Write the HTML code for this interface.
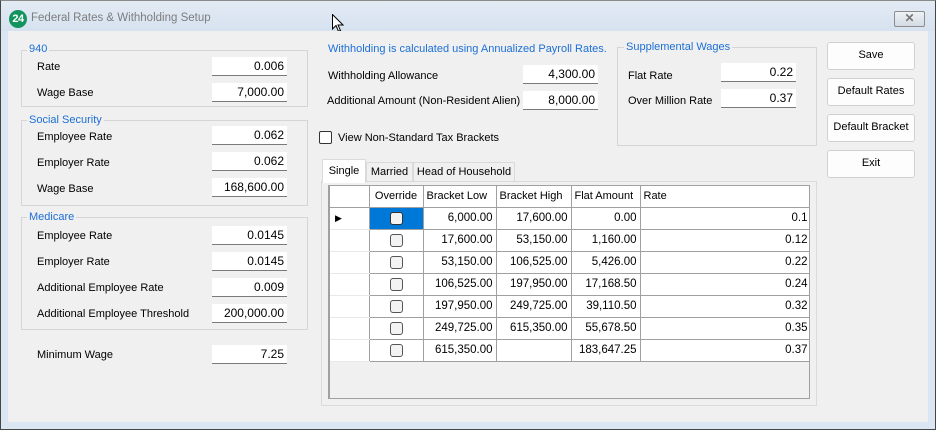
<!DOCTYPE html>
<html><head><meta charset="utf-8"><style>
*{box-sizing:border-box;margin:0;padding:0}
body{width:936px;height:430px;overflow:hidden;font-family:"Liberation Sans",sans-serif;font-size:11px;color:#000;background:#dae6f3;position:relative;white-space:nowrap}
.a{position:absolute}
.frame{left:0;top:0;width:936px;height:430px;border:1px solid #464646;border-top-color:#8a8a8a;background:#dbe6f3}
.title{left:1px;top:1px;width:934px;height:30px;background:linear-gradient(#e3ebf4,#d6e2f0)}
.body{left:8px;top:31px;width:920px;height:391px;background:#f0f0f0}
.grp{border:1px solid #d5d5d5}
.leg{background:#f0f0f0;color:#1c6fd6;padding:0 2px;line-height:13px}
.tb{background:#fff;border-bottom:1px solid #7a7a7a;text-align:right;padding-right:3px;line-height:19px;height:19px;font-size:12px}
.lbl{line-height:14px}
.btn{background:#fdfdfd;border:1px solid #d0d0d0;border-radius:3px;text-align:center;line-height:25px}
.cb{width:12px;height:12px;border:1px solid #333;border-radius:2px;background:#fff}
table{border-collapse:collapse;table-layout:fixed}
td{border:1px solid #a0a0a0;height:22px;padding:0 3px;text-align:right;background:#fff;white-space:nowrap;font-size:11.5px}
tr.h td{text-align:left;height:21px;font-size:11px}
td.rh{border-left:none;border-right:1px solid #a0a0a0;border-top:1px solid #f0f0f0;border-bottom:1px solid #e8e8e8}
.gc{display:inline-block;width:13px;height:13px;border:1px solid #555;border-radius:3px;background:#f3f3f3;vertical-align:middle}
</style></head><body>
<div class="a frame"></div>
<div class="a title"></div>
<div class="a" style="left:9px;top:10px;width:18px;height:18px;border-radius:50%;background:#13945f;color:#fff;font-weight:bold;font-size:11px;line-height:18px;text-align:center;letter-spacing:-0.5px">24</div>
<div class="a" style="left:31px;top:12px;color:#7d7d7d;font-size:11.5px">Federal Rates &amp; Withholding Setup</div>
<svg class="a" style="left:332px;top:14px" width="12" height="19" viewBox="0 0 12 19"><path d="M0.5 0.5 L0.5 15 L4 11.5 L6.5 17.5 L8.5 16.5 L6 11 L11 11 Z" fill="#fff" stroke="#000"/></svg>
<div class="a" style="left:894px;top:11px;width:31px;height:16px;border:1px solid #8d8d8d;border-radius:2px;background:linear-gradient(#eef2f6,#d4dbe4);text-align:center;font-size:12px;line-height:13px;color:#777;font-weight:bold">✕</div>
<div class="a body"></div>

<div class="a grp" style="left:21px;top:50px;width:287px;height:57px"></div>
<div class="a leg" style="left:27px;top:43px">940</div>
<div class="a lbl" style="left:37px;top:60px">Rate</div><div class="a tb" style="left:212px;top:57px;width:75px">0.006</div>
<div class="a lbl" style="left:37px;top:86px">Wage Base</div><div class="a tb" style="left:212px;top:83px;width:75px">7,000.00</div>

<div class="a grp" style="left:21px;top:120px;width:287px;height:86px"></div>
<div class="a leg" style="left:27px;top:114px">Social Security</div>
<div class="a lbl" style="left:37px;top:130px">Employee Rate</div><div class="a tb" style="left:212px;top:126px;width:75px">0.062</div>
<div class="a lbl" style="left:37px;top:156px">Employer Rate</div><div class="a tb" style="left:212px;top:152px;width:75px">0.062</div>
<div class="a lbl" style="left:37px;top:182px">Wage Base</div><div class="a tb" style="left:212px;top:178px;width:75px">168,600.00</div>

<div class="a grp" style="left:21px;top:217px;width:287px;height:113px"></div>
<div class="a leg" style="left:27px;top:211px">Medicare</div>
<div class="a lbl" style="left:37px;top:229px">Employee Rate</div><div class="a tb" style="left:212px;top:226px;width:75px">0.0145</div>
<div class="a lbl" style="left:37px;top:255px">Employer Rate</div><div class="a tb" style="left:212px;top:252px;width:75px">0.0145</div>
<div class="a lbl" style="left:37px;top:281px">Additional Employee Rate</div><div class="a tb" style="left:212px;top:278px;width:75px">0.009</div>
<div class="a lbl" style="left:37px;top:307px">Additional Employee Threshold</div><div class="a tb" style="left:212px;top:304px;width:75px">200,000.00</div>

<div class="a lbl" style="left:37px;top:348px">Minimum Wage</div><div class="a tb" style="left:212px;top:345px;width:75px">7.25</div>

<div class="a" style="left:328px;top:43px;color:#1c6fd6">Withholding is calculated using Annualized Payroll Rates.</div>
<div class="a lbl" style="left:328px;top:69px">Withholding Allowance</div><div class="a tb" style="left:523px;top:65px;width:75px">4,300.00</div>
<div class="a lbl" style="left:327px;top:94px">Additional Amount (Non-Resident Alien)</div><div class="a tb" style="left:523px;top:91px;width:75px">8,000.00</div>
<div class="a cb" style="left:319px;top:131px;width:13px;height:13px"></div>
<div class="a lbl" style="left:338px;top:131px">View Non-Standard Tax Brackets</div>

<div class="a grp" style="left:617px;top:47px;width:200px;height:99px"></div>
<div class="a leg" style="left:624px;top:41px">Supplemental Wages</div>
<div class="a lbl" style="left:628px;top:69px">Flat Rate</div><div class="a tb" style="left:721px;top:63px;width:75px">0.22</div>
<div class="a lbl" style="left:628px;top:94px">Over Million Rate</div><div class="a tb" style="left:721px;top:89px;width:75px">0.37</div>

<div class="a btn" style="left:827px;top:42px;width:88px;height:28px">Save</div>
<div class="a btn" style="left:827px;top:78px;width:88px;height:28px">Default Rates</div>
<div class="a btn" style="left:827px;top:114px;width:88px;height:28px">Default Bracket</div>
<div class="a btn" style="left:827px;top:150px;width:88px;height:28px">Exit</div>

<div class="a" style="left:321px;top:181px;width:496px;height:225px;border:1px solid #dadada;background:#fff"></div>
<div class="a" style="left:322px;top:182px;width:494px;height:223px;background:#f0f0f0"></div>
<div class="a" style="left:366px;top:162px;width:47px;height:20px;border:1px solid #dadada;background:#f0f0f0;text-align:center;line-height:18px">Married</div>
<div class="a" style="left:413px;top:162px;width:102px;height:20px;border:1px solid #dadada;background:#f0f0f0;text-align:center;line-height:18px">Head of Household</div>
<div class="a" style="left:322px;top:159px;width:44px;height:24px;border:1px solid #dadada;border-bottom:none;background:#fff;text-align:center;line-height:22px">Single</div>

<div class="a" style="left:328px;top:185px;width:482px;height:214px;border:1px solid #a0a0a0;border-left:2px solid #a0a0a0;background:#f0f0f0;overflow:hidden">
<table style="width:481px">
<colgroup><col style="width:39px"><col style="width:54px"><col style="width:73px"><col style="width:75px"><col style="width:69px"><col style="width:171px"></colgroup>
<tr class="h"><td style="border-top:none;border-left:none"></td><td style="border-top:none;text-align:center">Override</td><td style="border-top:none">Bracket Low</td><td style="border-top:none">Bracket High</td><td style="border-top:none">Flat Amount</td><td style="border-top:none">Rate</td></tr>
<tr><td class="rh" style="text-align:left;padding-left:5px;font-size:9px">▶</td><td style="text-align:center;background:#0078d7"><span class="gc" style="border-color:#333"></span></td><td>6,000.00</td><td>17,600.00</td><td>0.00</td><td>0.1</td></tr>
<tr><td class="rh"></td><td style="text-align:center"><span class="gc"></span></td><td>17,600.00</td><td>53,150.00</td><td>1,160.00</td><td>0.12</td></tr>
<tr><td class="rh"></td><td style="text-align:center"><span class="gc"></span></td><td>53,150.00</td><td>106,525.00</td><td>5,426.00</td><td>0.22</td></tr>
<tr><td class="rh"></td><td style="text-align:center"><span class="gc"></span></td><td>106,525.00</td><td>197,950.00</td><td>17,168.50</td><td>0.24</td></tr>
<tr><td class="rh"></td><td style="text-align:center"><span class="gc"></span></td><td>197,950.00</td><td>249,725.00</td><td>39,110.50</td><td>0.32</td></tr>
<tr><td class="rh"></td><td style="text-align:center"><span class="gc"></span></td><td>249,725.00</td><td>615,350.00</td><td>55,678.50</td><td>0.35</td></tr>
<tr><td class="rh"></td><td style="text-align:center"><span class="gc"></span></td><td>615,350.00</td><td></td><td>183,647.25</td><td>0.37</td></tr>
</table>
</div>
</body></html>
